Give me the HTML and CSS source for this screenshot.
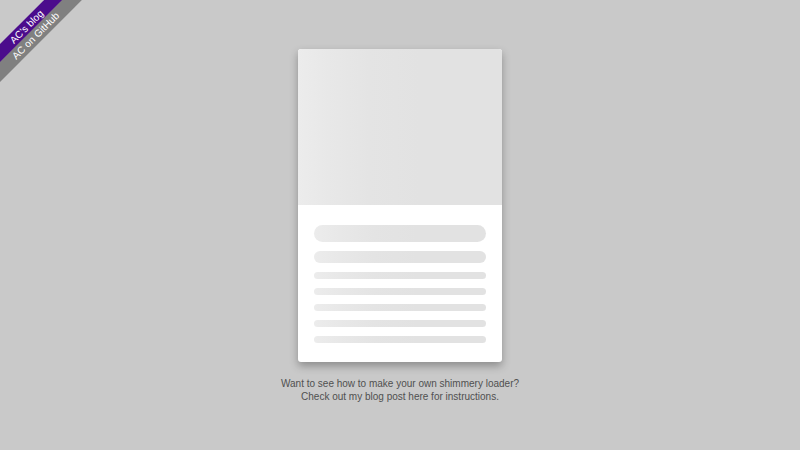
FILE: index.html
```html
<!DOCTYPE html>
<html lang="en">
<head>
    <meta charset="UTF-8">
    <meta name="viewport" content="width=device-width, initial-scale=1.0">
    <title>Shimmery loader</title>
    <link rel="stylesheet" href="styles.css">
</head>
<body>

    <a class="ribbon ribbon-blog" href="#">AC's blog</a>
    <a class="ribbon ribbon-github" href="#">AC on GitHub</a>

    <div class="card">
        <div class="card-image shimmer"></div>
        <div class="card-body">
            <div class="line line-title shimmer"></div>
            <div class="line line-sub shimmer"></div>
            <div class="line shimmer"></div>
            <div class="line shimmer"></div>
            <div class="line shimmer"></div>
            <div class="line shimmer"></div>
            <div class="line shimmer"></div>
        </div>
    </div>

    <p class="note">
        Want to see how to make your own shimmery loader?<br>
        Check out my blog post here for instructions.
    </p>

</body>
</html>
```

FILE: styles.css
```css
body {
    font-family: 'Liberation Sans', Arial, sans-serif;
    margin: 0;
    padding: 0;
    height: 100vh;
    background: #c9c9c9;
    display: flex;
    flex-direction: column;
    justify-content: center;
    align-items: center;
    overflow: hidden;
}

/* corner ribbons */
.ribbon {
    position: absolute;
    width: 200px;
    height: 14px;
    line-height: 14px;
    font-size: 10px;
    color: #fff;
    text-align: center;
    text-decoration: none;
    transform: rotate(-45deg);
}

.ribbon-blog {
    left: -73px;
    top: 20px;
    background: #4b0c8c;
    box-shadow: inset 0 -1px 0 rgba(220, 190, 255, 0.6);
}

.ribbon-github {
    left: -64px;
    top: 29px;
    background: #808080;
}

/* placeholder card */
.card {
    width: 204px;
    margin-top: 2px;
    background: #fff;
    border-radius: 3px;
    overflow: hidden;
    box-shadow: 0 4px 8px rgba(0, 0, 0, 0.3);
}

.shimmer {
    background: linear-gradient(to right, #ececec 0%, #e8e8e8 15%, #e4e4e4 35%, #e2e2e2 60%, #e2e2e2 100%);
}

.card-image {
    height: 156px;
}

.card-body {
    padding: 20px 16px 19px;
    display: flex;
    flex-direction: column;
    gap: 9px;
}

.line {
    height: 7px;
    border-radius: 4px;
}

.line-title {
    height: 17px;
    border-radius: 9px;
}

.line-sub {
    height: 12px;
    border-radius: 6px;
}

.note {
    margin: 15px 0 0;
    font-size: 10px;
    line-height: 13px;
    color: #505050;
    text-align: center;
}
```
